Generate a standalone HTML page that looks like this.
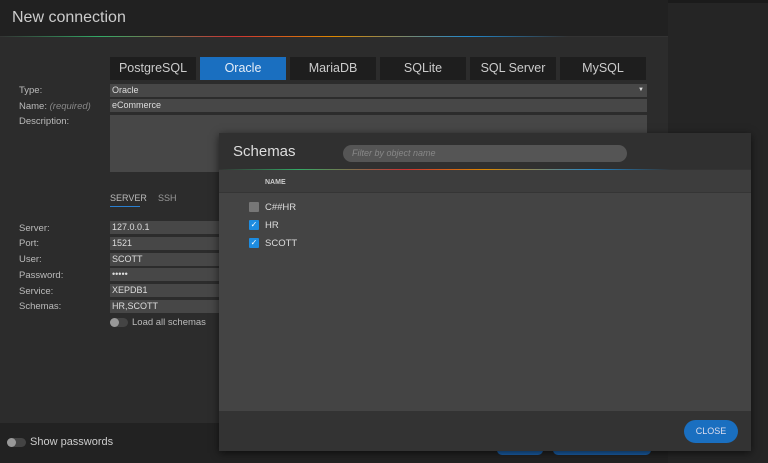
<!DOCTYPE html>
<html><head><style>
*{margin:0;padding:0;box-sizing:border-box}
body{width:768px;height:463px;overflow:hidden;background:#252525;font-family:"Liberation Sans",sans-serif;color:#ddd;position:relative}
.abs{position:absolute}
.grad{height:1px;background:linear-gradient(90deg,#333 0%,#3a6 15%,#c33 35%,#d80 50%,#28c 70%,#333 85%)}
.tab{position:absolute;top:57px;height:23px;width:86px;background:#1e1e1e;color:#ccc;font-size:12.5px;text-align:center;line-height:23px}
.inp{position:absolute;left:110px;background:#474747;font-size:9px;color:#ddd;padding-left:2px;line-height:13px;height:13px}
.lbl{position:absolute;left:19px;font-size:9.5px;color:#bbb}
.cb{position:absolute;left:249px;width:10px;height:10px;border-radius:1px;background:#1d8ce0;color:#fff;font-size:8px;line-height:10px;text-align:center}
.rt{position:absolute;left:265px;font-size:9.5px;color:#ddd}
</style></head><body>
<div class="abs" style="left:668px;top:0;width:100px;height:3px;background:#1b1b1b"></div>
<div class="abs" style="left:0;top:0;width:668px;height:463px;background:#2c2c2c"></div>
<div class="abs" style="left:0;top:0;width:668px;height:36px;background:#212121"></div>
<div class="abs" style="left:12px;top:9px;font-size:16px;color:#ccc">New connection</div>
<div class="abs grad" style="left:0;top:36px;width:668px"></div>
<div class="tab" style="left:110px">PostgreSQL</div>
<div class="tab" style="left:200px;background:#1a6fc0;color:#e6eef8">Oracle</div>
<div class="tab" style="left:290px">MariaDB</div>
<div class="tab" style="left:380px">SQLite</div>
<div class="tab" style="left:470px">SQL Server</div>
<div class="tab" style="left:560px">MySQL</div>
<div class="lbl" style="top:85px">Type:</div>
<div class="lbl" style="top:101px">Name: <i style="color:#888">(required)</i></div>
<div class="lbl" style="top:116px">Description:</div>
<div class="inp" style="top:84px;width:537px">Oracle<span style="position:absolute;right:3px;font-size:6px">▼</span></div>
<div class="inp" style="top:99px;width:537px">eCommerce</div>
<div class="inp" style="top:115px;width:537px;height:57px"></div>
<div class="abs" style="left:110px;top:193px;font-size:9px;color:#bbb">SERVER</div>
<div class="abs" style="left:110px;top:206px;width:30px;height:1px;background:#2a7fd0"></div>
<div class="abs" style="left:158px;top:193px;font-size:9px;color:#999">SSH</div>
<div class="lbl" style="top:223px">Server:</div><div class="inp" style="top:221px;width:110px">127.0.0.1</div>
<div class="lbl" style="top:238px">Port:</div><div class="inp" style="top:237px;width:110px">1521</div>
<div class="lbl" style="top:254px">User:</div><div class="inp" style="top:253px;width:110px">SCOTT</div>
<div class="lbl" style="top:270px">Password:</div><div class="inp" style="top:268px;width:110px">•••••</div>
<div class="lbl" style="top:286px">Service:</div><div class="inp" style="top:284px;width:110px">XEPDB1</div>
<div class="lbl" style="top:301px">Schemas:</div><div class="inp" style="top:300px;width:110px">HR,SCOTT</div>
<div class="abs" style="left:110px;top:318px;width:18px;height:9px;border-radius:5px;background:#444"></div>
<div class="abs" style="left:110px;top:318px;width:9px;height:9px;border-radius:50%;background:#999"></div>
<div class="abs" style="left:132px;top:317px;font-size:9.5px;color:#bbb">Load all schemas</div>
<div class="abs" style="left:0;top:423px;width:668px;height:40px;background:#222"></div>
<div class="abs" style="left:7px;top:438px;width:19px;height:9px;border-radius:5px;background:#444"></div>
<div class="abs" style="left:7px;top:438px;width:9px;height:9px;border-radius:50%;background:#999"></div>
<div class="abs" style="left:30px;top:436px;font-size:11px;color:#ccc">Show passwords</div>
<div class="abs" style="left:497px;top:445px;width:46px;height:10px;border-radius:6px;background:#1a5fa8"></div>
<div class="abs" style="left:553px;top:445px;width:98px;height:10px;border-radius:6px;background:#1a5fa8"></div>
<div class="abs" style="left:219px;top:133px;width:532px;height:318px;background:#444;box-shadow:0 2px 8px rgba(0,0,0,.6)"></div>
<div class="abs" style="left:219px;top:133px;width:532px;height:36px;background:#303030"></div>
<div class="abs" style="left:233px;top:143px;font-size:15px;color:#ddd">Schemas</div>
<div class="abs" style="left:343px;top:145px;width:284px;height:17px;border-radius:9px;background:#555;font-size:9px;color:#888;font-style:italic;padding:3px 9px">Filter by object name</div>
<div class="abs grad" style="left:219px;top:169px;width:532px"></div>
<div class="abs" style="left:219px;top:170px;width:532px;height:23px;background:#3d3d3d;border-bottom:1px solid #353535"></div>
<div class="abs" style="left:265px;top:179px;font-size:7px;font-weight:bold;color:#ccc">NAME</div>
<div class="cb" style="top:202px;background:#777"></div><div class="rt" style="top:202px">C##HR</div>
<div class="cb" style="top:220px">✓</div><div class="rt" style="top:220px">HR</div>
<div class="cb" style="top:238px">✓</div><div class="rt" style="top:238px">SCOTT</div>
<div class="abs" style="left:219px;top:411px;width:532px;height:40px;background:#333"></div>
<div class="abs" style="left:684px;top:420px;width:54px;height:23px;border-radius:12px;background:#1a6fc0;color:#dde;font-size:9px;text-align:center;line-height:23px">CLOSE</div>
</body></html>
